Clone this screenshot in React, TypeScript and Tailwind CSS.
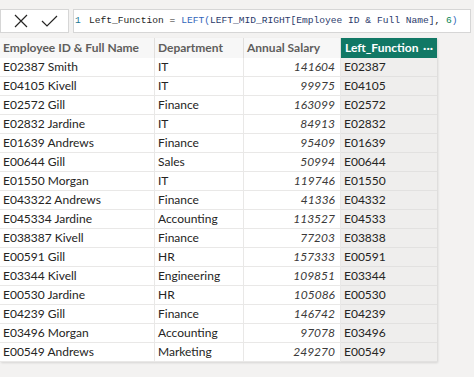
import React from "react";

const rows: [string, string, string][] = [
  ["E02387 Smith", "IT", "141604"],
  ["E04105 Kivell", "IT", "99975"],
  ["E02572 Gill", "Finance", "163099"],
  ["E02832 Jardine", "IT", "84913"],
  ["E01639 Andrews", "Finance", "95409"],
  ["E00644 Gill", "Sales", "50994"],
  ["E01550 Morgan", "IT", "119746"],
  ["E043322 Andrews", "Finance", "41336"],
  ["E045334 Jardine", "Accounting", "113527"],
  ["E038387 Kivell", "Finance", "77203"],
  ["E00591 Gill", "HR", "157333"],
  ["E03344 Kivell", "Engineering", "109851"],
  ["E00530 Jardine", "HR", "105086"],
  ["E04239 Gill", "Finance", "146742"],
  ["E03496 Morgan", "Accounting", "97078"],
  ["E00549 Andrews", "Marketing", "249270"],
];

export default function App() {
  return (
    <div
      className="w-[474px] h-[377px] bg-[#f3f2f1] overflow-hidden"
      style={{ fontFamily: 'Lato, "Open Sans", sans-serif' }}
    >
      {/* Formula bar */}
      <div className="flex gap-[4px] pt-[9px] h-[38px]">
        <div className="w-[69px] h-[24px] bg-white border border-[#d6d6d6] flex items-center pl-[12px] gap-[12px]">
          <svg width="16" height="16" viewBox="0 0 16 16" fill="none" stroke="#252423" strokeWidth="1.2">
            <path d="M2 2 L14 14 M14 2 L2 14" />
          </svg>
          <svg width="17" height="14" viewBox="0 0 17 14" fill="none" stroke="#252423" strokeWidth="1.2">
            <path d="M1 7 L6 12 L16 2" />
          </svg>
        </div>
        <div
          className="w-[398px] h-[24px] bg-white border border-[#d6d6d6] flex items-center pl-[1px] text-[9.6px]"
          style={{ fontFamily: '"Liberation Mono", "DejaVu Sans Mono", monospace' }}
        >
          <span className="w-[14px] shrink-0 text-[#237893]">1</span>
          <span className="whitespace-pre shrink-0">
            <span className="text-[#1e1e1e]">Left_Function = </span>
            <span className="text-[#3165bb]">LEFT(</span>
            <span className="text-[#2b3a6b]">LEFT_MID_RIGHT[Employee ID &amp; Full Name]</span>
            <span className="text-[#1e1e1e]">, </span>
            <span className="text-[#098658]">6</span>
            <span className="text-[#3165bb]">)</span>
          </span>
        </div>
      </div>

      {/* Table */}
      <div className="w-[437px] bg-white shadow-[1px_1px_2px_rgba(0,0,0,0.12)] text-[12px]">
        <div className="grid grid-cols-[155px_89px_97px_96px] h-[20px] border-b border-[#e1dfdd]">
          <div className="bg-[#f7f7f7] border-r border-[#e1dfdd] pl-[3px] font-bold text-[#605e5c] leading-[20px] whitespace-nowrap">
            Employee ID &amp; Full Name
          </div>
          <div className="bg-[#f7f7f7] border-r border-[#e1dfdd] pl-[3px] font-bold text-[#605e5c] leading-[20px]">
            Department
          </div>
          <div className="bg-[#f7f7f7] border-r border-[#e1dfdd] pl-[3px] font-bold text-[#605e5c] leading-[20px]">
            Annual Salary
          </div>
          <div className="bg-[#117865] pl-[4px] pr-[4px] font-bold text-white leading-[20px] flex justify-between whitespace-nowrap">
            <span>Left_Function</span>
            <span>···</span>
          </div>
        </div>
        {rows.map(([name, dept, sal]) => (
          <div
            key={name}
            className="grid grid-cols-[155px_89px_97px_96px] h-[19px] text-[#252423] leading-[18px]"
          >
            <div className="border-r border-b border-[#e9e8e7] pl-[3px] whitespace-nowrap">{name}</div>
            <div className="border-r border-b border-[#e9e8e7] pl-[3px]">{dept}</div>
            <div className="border-r border-b border-[#e9e8e7] pr-[5px] text-right italic text-[#3b3a39]">{sal}</div>
            <div className="bg-[#efeeed] border-b border-[#e2e1e0] pl-[3px]">
              {name.split(" ")[0].slice(0, 6)}
            </div>
          </div>
        ))}
      </div>
    </div>
  );
}
